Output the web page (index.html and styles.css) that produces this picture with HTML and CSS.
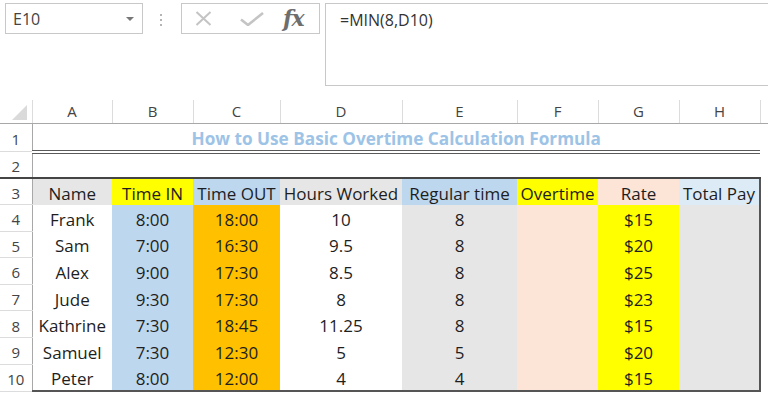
FILE: index.html
```html
<!DOCTYPE html>
<html lang="en">
<head>
    <meta charset="UTF-8">
    <meta name="viewport" content="width=device-width, initial-scale=1.0">
    <title>Basic Overtime Calculation</title>
    <link rel="stylesheet" href="styles.css">
</head>
<body>
    <div class="toolbar">
        <div class="namebox">
            <span>E10</span>
            <span class="caret"></span>
        </div>
        <div class="grip"><i></i><i></i><i></i></div>
        <div class="fxbox">
            <svg width="17" height="15" viewBox="0 0 17 15"><path d="M1.5 1 L15.5 14 M15.5 1 L1.5 14" stroke="#c4c4c4" stroke-width="2" fill="none"/></svg>
            <svg width="24" height="14" viewBox="0 0 24 14"><path d="M1 7.5 L8 13 L23 1" stroke="#c4c4c4" stroke-width="2.6" fill="none"/></svg>
            <span class="fx">fx</span>
        </div>
        <div class="formula">=MIN(8,D10)</div>
    </div>

    <table class="sheet">
        <colgroup>
            <col class="c-rh">
            <col class="c-a">
            <col class="c-b">
            <col class="c-c">
            <col class="c-d">
            <col class="c-e">
            <col class="c-f">
            <col class="c-g">
            <col class="c-h">
            <col class="c-i">
        </colgroup>
        <thead>
            <tr class="colhead">
                <th class="corner"><span class="tri"></span></th>
                <th>A</th><th>B</th><th>C</th><th>D</th><th>E</th><th>F</th><th>G</th><th>H</th><th></th>
            </tr>
        </thead>
        <tbody id="rows">
            <tr class="r1">
                <td class="rh">1</td>
                <td colspan="8" class="title">How to Use Basic Overtime Calculation Formula</td>
                <td class="blank"></td>
            </tr>
            <tr class="r2">
                <td class="rh">2</td>
                <td colspan="8" class="gap"></td>
                <td class="blank"></td>
            </tr>
            <tr class="r3">
                <td class="rh">3</td>
                <td class="gray">Name</td>
                <td class="yellow">Time IN</td>
                <td class="blue">Time OUT</td>
                <td class="gray">Hours Worked</td>
                <td class="blue">Regular time</td>
                <td class="yellow">Overtime</td>
                <td class="peach">Rate</td>
                <td class="pale edge">Total Pay</td>
                <td class="blank"></td>
            </tr>
        </tbody>
    </table>

    <script>
        let staff = [
            { name: "Frank", timeIn: "8:00", timeOut: "18:00", hours: "10", regular: "8", rate: "$15" },
            { name: "Sam", timeIn: "7:00", timeOut: "16:30", hours: "9.5", regular: "8", rate: "$20" },
            { name: "Alex", timeIn: "9:00", timeOut: "17:30", hours: "8.5", regular: "8", rate: "$25" },
            { name: "Jude", timeIn: "9:30", timeOut: "17:30", hours: "8", regular: "8", rate: "$23" },
            { name: "Kathrine", timeIn: "7:30", timeOut: "18:45", hours: "11.25", regular: "8", rate: "$15" },
            { name: "Samuel", timeIn: "7:30", timeOut: "12:30", hours: "5", regular: "5", rate: "$20" },
            { name: "Peter", timeIn: "8:00", timeOut: "12:00", hours: "4", regular: "4", rate: "$15" }
        ];

        function loadRows() {
            let body = document.getElementById("rows");
            staff.forEach((p, index) => {
                let row = document.createElement("tr");
                row.classList.add("data");
                if (index === staff.length - 1) row.classList.add("last");
                row.innerHTML = `<td class="rh">${index + 4}</td>
                    <td class="white">${p.name}</td>
                    <td class="blue">${p.timeIn}</td>
                    <td class="orange">${p.timeOut}</td>
                    <td class="white">${p.hours}</td>
                    <td class="gray">${p.regular}</td>
                    <td class="peach"></td>
                    <td class="yellow">${p.rate}</td>
                    <td class="gray edge"></td>
                    <td class="blank"></td>`;
                body.appendChild(row);
            });
        }

        loadRows();
    </script>
</body>
</html>
```

FILE: styles.css
```css
body {
    font-family: "Open Sans", "Liberation Sans", sans-serif;
    margin: 0;
    padding: 0;
    background: white;
    overflow: hidden;
    width: 768px;
    height: 396px;
}

.toolbar {
    display: flex;
    align-items: flex-start;
    height: 97px;
    padding-top: 3px;
}
.namebox {
    display: flex;
    align-items: center;
    justify-content: space-between;
    margin-left: 5px;
    width: 138px;
    height: 31px;
    border: 1px solid #c8c8c8;
    padding: 0 7px 0 7px;
    box-sizing: border-box;
    font-size: 16px;
    color: #444;
}
.caret {
    width: 0;
    height: 0;
    border-left: 4px solid transparent;
    border-right: 4px solid transparent;
    border-top: 4px solid #777;
    margin-right: 1px;
}
.grip {
    display: flex;
    flex-direction: column;
    gap: 3px;
    margin: 11px 0 0 17px;
    width: 2px;
}
.grip i {
    display: block;
    width: 2px;
    height: 2px;
    background: #b4b4b4;
}
.fxbox {
    display: flex;
    align-items: center;
    margin-left: 19px;
    width: 139px;
    height: 31px;
    border: 1px solid #c8c8c8;
    box-sizing: border-box;
    padding-left: 13px;
}
.fxbox svg:nth-child(2) {
    margin-left: 28px;
}
.fx {
    font-family: "DejaVu Serif", "Liberation Serif", serif;
    font-style: italic;
    font-weight: bold;
    font-size: 22px;
    color: #6e6e6e;
    margin-left: 19px;
    margin-top: -2px;
    letter-spacing: -1px;
}
.formula {
    flex: 1;
    margin-left: 5px;
    height: 83px;
    border: 1px solid #c8c8c8;
    border-right: none;
    box-sizing: border-box;
    padding: 5px 0 0 14px;
    font-size: 16px;
    color: #333;
}

.sheet {
    table-layout: fixed;
    border-collapse: collapse;
    width: 768px;
    font-size: 17px;
    color: #1e1e1e;
}
.c-rh { width: 32px; }
.c-a { width: 80px; }
.c-b { width: 81px; }
.c-c { width: 87px; }
.c-d { width: 122px; }
.c-e { width: 115px; }
.c-f { width: 81px; }
.c-g { width: 81px; }
.c-h { width: 81px; }
.c-i { width: 8px; }

.sheet td, .sheet th {
    padding: 0;
    text-align: center;
    vertical-align: middle;
    white-space: nowrap;
    overflow: hidden;
}
.sheet td {
    padding-top: 3px;
}
.colhead {
    height: 23px;
}
.colhead th {
    font-weight: normal;
    font-size: 15px;
    color: #444;
    border-right: 1px solid #dcdcdc;
    border-bottom: 1px solid #a8a8a8;
}
.corner {
    position: relative;
}
.tri {
    position: absolute;
    left: 12px;
    top: 5px;
    width: 0;
    height: 0;
    border-left: 15px solid transparent;
    border-bottom: 15px solid #dadada;
}
.rh {
    font-size: 15px;
    color: #444;
    border-right: 1px solid #a8a8a8;
    border-bottom: 1px solid #dcdcdc;
}

.r1 { height: 28px; }
.r2 { height: 26px; }
.r3 { height: 27px; }
.data { height: 26.6px; }

.title {
    font-weight: bold;
    font-size: 17.2px;
    color: #9dc3e6;
    border-bottom: 4px double #5a5a5a;
}
.gap {
    border-bottom: 2px solid #444;
}
.r3 td.rh {
    border-top: 2px solid #444;
}
.edge {
    border-right: 2px solid #555;
}
.last td:not(.blank):not(.rh) {
    border-bottom: 2px solid #555;
}

.gray { background: #e7e6e6; }
.yellow { background: #ffff00; }
.blue { background: #bdd7ee; }
.orange { background: #ffc000; }
.peach { background: #fce4d6; }
.pale { background: #ddebf7; }
.white { background: white; }
```
